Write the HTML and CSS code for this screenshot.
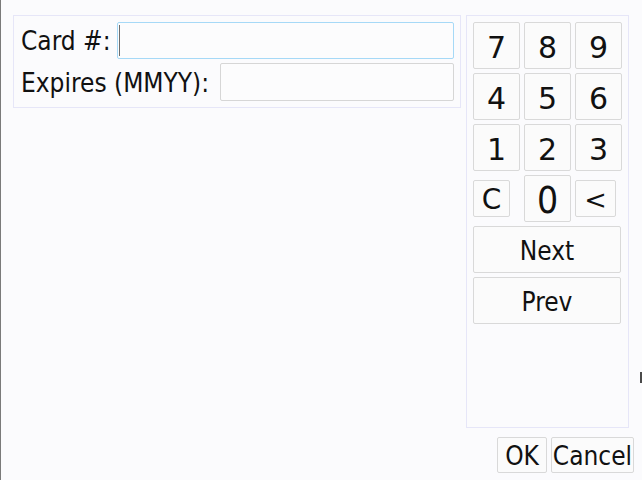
FILE: index.html
```html
<!DOCTYPE html>
<html>
<head>
<meta charset="utf-8">
<link rel="stylesheet" href="styles.css">
</head>
<body>
<div class="screen">
  <div class="main">
    <div class="form-panel">
      <div class="row">
        <span class="label label-card">Card #:</span>
        <div class="field field-active"><span class="caret"></span></div>
      </div>
      <div class="row">
        <span class="label label-exp">Expires (MMYY):</span>
        <div class="field"></div>
      </div>
    </div>
    <div class="keypad-panel">
      <div class="keys">
        <div class="key">7</div>
        <div class="key">8</div>
        <div class="key">9</div>
        <div class="key">4</div>
        <div class="key">5</div>
        <div class="key">6</div>
        <div class="key">1</div>
        <div class="key">2</div>
        <div class="key">3</div>
        <div class="key key-small key-c">C</div>
        <div class="key key-zero">0</div>
        <div class="key key-small key-back">&lt;</div>
      </div>
      <div class="key key-wide">Next</div>
      <div class="key key-wide">Prev</div>
    </div>
  </div>
  <div class="actions">
    <div class="btn btn-ok">OK</div>
    <div class="btn btn-cancel">Cancel</div>
  </div>
  <div class="grip"></div>
</div>
</body>
</html>
```
FILE: styles.css
```css
html, body {
  margin: 0;
  padding: 0;
  height: 100%;
}
body {
  background: #fbfbfd;
  font-family: "DejaVu Sans", Verdana, sans-serif;
  color: #111;
  overflow: hidden;
}
.screen {
  position: relative;
  height: 480px;
  width: 642px;
  box-sizing: border-box;
  border-left: 1px solid #7a7a7a;
  padding: 15px 8px 0 12px;
  display: flex;
  flex-direction: column;
}
.main {
  display: flex;
  align-items: flex-start;
  gap: 5px;
}
.form-panel {
  width: 448px;
  box-sizing: border-box;
  border: 1px solid #e6e6f8;
  padding: 6px 6px 6px 7px;
  display: flex;
  flex-direction: column;
  gap: 4px;
}
.row {
  display: flex;
  align-items: center;
}
.label {
  font-family: "DejaVu Sans Condensed", "DejaVu Sans", sans-serif;
  font-stretch: condensed;
  font-size: 26px;
  line-height: 30px;
  white-space: nowrap;
  padding-top: 1px;
}
.label-card { width: 96px; flex: none; }
.label-exp { width: 199px; flex: none; }
.field {
  flex: 1;
  height: 38px;
  box-sizing: border-box;
  border: 1px solid #d6d6d6;
  border-radius: 2px;
  background: #fcfcfd;
  display: flex;
  align-items: center;
}
.field-active {
  height: 37px;
  border-color: #a6d9f7;
}
.caret {
  display: block;
  width: 1px;
  height: 31px;
  margin-left: 1px;
  background: #6e6e6e;
}
.keypad-panel {
  width: 163px;
  height: 413px;
  box-sizing: border-box;
  border: 1px solid #e6e6f8;
  padding: 6px 7px 6px 6px;
  display: flex;
  flex-direction: column;
  gap: 4px;
}
.keys {
  display: grid;
  grid-template-columns: 47px 47px 47px;
  grid-auto-rows: 47px;
  column-gap: 4px;
  row-gap: 4px;
}
.key {
  box-sizing: border-box;
  border: 1px solid #d9d9d9;
  border-radius: 2px;
  background: #fbfbfb;
  display: flex;
  align-items: center;
  justify-content: center;
  font-size: 30px;
  line-height: 1;
  padding-top: 4px;
}
.key-small {
  height: 37px;
  align-self: center;
  justify-self: start;
  font-size: 28px;
  padding-top: 2px;
}
.key-c { width: 37px; }
.key-back { width: 41px; font-size: 27px; }
.key-zero {
  font-family: "DejaVu Sans Condensed", "DejaVu Sans", sans-serif;
  font-stretch: condensed;
  font-size: 37px;
  padding-top: 3px;
}
.key-wide {
  width: 148px;
  height: 47px;
  font-family: "DejaVu Sans Condensed", "DejaVu Sans", sans-serif;
  font-stretch: condensed;
  font-size: 26px;
  padding-top: 2px;
}
.actions {
  margin-top: 9px;
  display: flex;
  justify-content: flex-end;
  gap: 4px;
}
.btn {
  box-sizing: border-box;
  height: 36px;
  border: 1px solid #d9d9d9;
  border-radius: 2px;
  background: #fbfbfb;
  display: flex;
  align-items: center;
  justify-content: center;
  font-family: "DejaVu Sans Condensed", "DejaVu Sans", sans-serif;
  font-stretch: condensed;
  font-size: 26px;
  line-height: 1;
  white-space: nowrap;
  padding-top: 2px;
}
.btn-ok { width: 50px; }
.btn-cancel { width: 83px; }
.grip {
  position: absolute;
  right: 0;
  top: 372px;
  width: 2px;
  height: 11px;
  background: #4a4a4a;
}
```
